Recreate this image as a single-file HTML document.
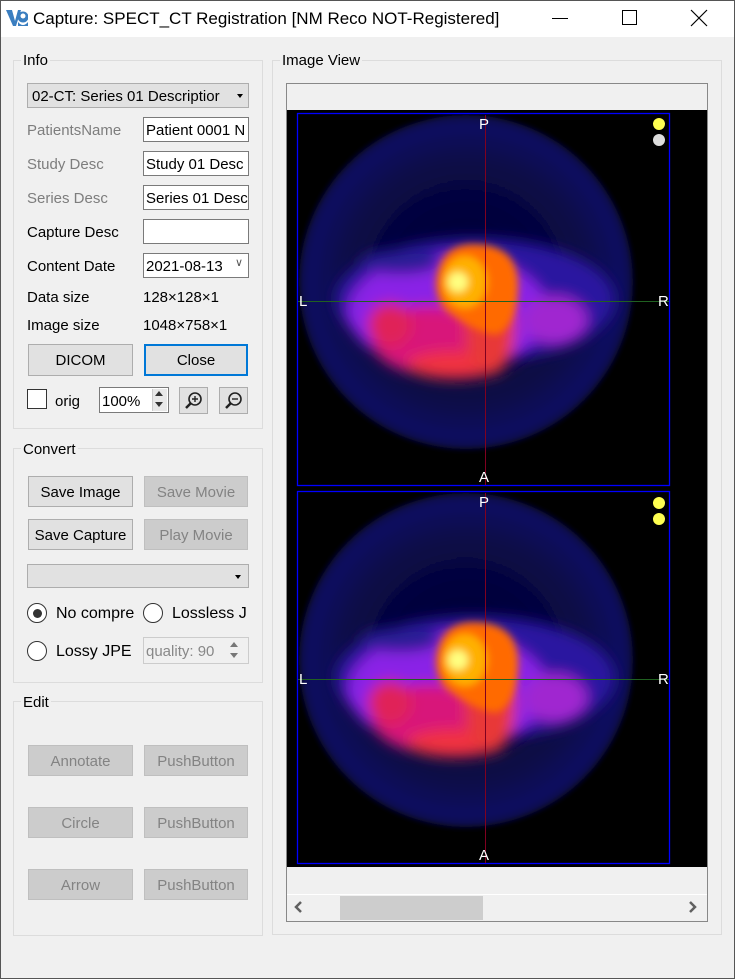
<!DOCTYPE html>
<html><head><meta charset="utf-8"><style>
*{box-sizing:border-box;margin:0;padding:0}
body{width:735px;height:979px;background:#f0f0f0;font-family:"Liberation Sans",sans-serif;font-size:15px;color:#000;position:relative;overflow:hidden}
.a{position:absolute}
.win{left:0;top:0;width:735px;height:979px;border:1px solid #555}
.title{left:1px;top:1px;width:733px;height:36px;background:#fff}
.grp{border:1px solid #dcdcdc}
.lg{background:#f0f0f0;padding:0 2px;font-size:15px}
.btn{background:#e1e1e1;border:1px solid #adadad;text-align:center;line-height:32px;font-size:15px}
.dis{background:#cccccc;border:1px solid #bfbfbf;color:#838383}
.edit{background:#fff;border:1px solid #7a7a7a;padding-left:2px;line-height:25px;overflow:hidden;white-space:nowrap;font-size:15px}
.gray{color:#7d7d7d}
.radio{width:20px;height:20px;border:1px solid #333;border-radius:50%;background:#fff}
</style></head><body>
<div class="a win"></div>
<div class="a title"></div>
<svg class="a" style="left:6px;top:8px" width="22" height="20" viewBox="0 0 22 20"><path d="M0 2 L6 2 L9 13 L12 2 L15 2 L10 18 L7 18Z" fill="#3a7ec0"/><circle cx="17" cy="9" r="5.5" fill="#3a7ec0"/><circle cx="17" cy="8" r="2.5" fill="#fff"/><path d="M12 14 Q17 20 22 14 L22 18 L12 18Z" fill="#3a7ec0"/></svg>
<div class="a" style="left:33px;top:9px;font-size:17px;">Capture: SPECT_CT Registration [NM Reco NOT-Registered]</div>
<div class="a" style="left:552px;top:18px;width:16px;height:1px;background:#000"></div>
<div class="a" style="left:622px;top:10px;width:15px;height:15px;border:1px solid #000"></div>
<svg class="a" style="left:690px;top:9px" width="18" height="18"><path d="M1 1L17 17M17 1L1 17" stroke="#000" stroke-width="1.2"/></svg>

<div class="a grp" style="left:13px;top:60px;width:250px;height:369px"></div>
<div class="a lg" style="left:21px;top:52px">Info</div>
<div class="a btn" style="left:27px;top:83px;width:222px;height:25px;line-height:25px;text-align:left;padding-left:4px">02-CT: Series 01 Descriptior</div>
<div class="a" style="left:237px;top:94px;border:3px solid transparent;border-top:4px solid #000"></div>
<div class="a gray" style="left:27px;top:122px">PatientsName</div>
<div class="a edit" style="left:143px;top:117px;width:106px;height:25px">Patient 0001 N</div>
<div class="a gray" style="left:27px;top:156px">Study Desc</div>
<div class="a edit" style="left:143px;top:151px;width:106px;height:25px">Study 01 Desc</div>
<div class="a gray" style="left:27px;top:190px">Series Desc</div>
<div class="a edit" style="left:143px;top:185px;width:106px;height:25px">Series 01 Desc</div>
<div class="a" style="left:27px;top:224px">Capture Desc</div>
<div class="a edit" style="left:143px;top:219px;width:106px;height:25px"></div>
<div class="a" style="left:27px;top:258px">Content Date</div>
<div class="a edit" style="left:143px;top:253px;width:106px;height:25px">2021-08-13</div>
<div class="a" style="left:235px;top:256px;font-size:11px;color:#555">&#x2228;</div>
<div class="a" style="left:27px;top:289px">Data size</div>
<div class="a" style="left:143px;top:289px">128×128×1</div>
<div class="a" style="left:27px;top:317px">Image size</div>
<div class="a" style="left:143px;top:317px">1048×758×1</div>
<div class="a btn" style="left:28px;top:344px;width:105px;height:32px">DICOM</div>
<div class="a btn" style="left:144px;top:344px;width:104px;height:32px;border:2px solid #0078d7;background:#e1e1e1;line-height:30px">Close</div>
<div class="a" style="left:27px;top:389px;width:20px;height:20px;border:1px solid #333;background:#fff"></div>
<div class="a" style="left:55px;top:393px">orig</div>
<div class="a edit" style="left:99px;top:387px;width:70px;height:26px;line-height:27px">100%</div>
<div class="a" style="left:152px;top:389px;width:15px;height:22px;background:#e8e8e8;border-left:1px solid #ccc"></div>
<div class="a" style="left:155px;top:391px;border:4px solid transparent;border-bottom:5px solid #333;border-top:0"></div>
<div class="a" style="left:155px;top:402px;border:4px solid transparent;border-top:5px solid #333;border-bottom:0"></div>
<div class="a btn" style="left:179px;top:387px;width:29px;height:27px"></div>
<svg class="a" style="left:183px;top:390px" width="22" height="22"><circle cx="12" cy="9" r="6" fill="none" stroke="#222" stroke-width="1.6"/><path d="M9 9h6M12 6v6" stroke="#222" stroke-width="1.4"/><path d="M8 13l-5 5" stroke="#222" stroke-width="2.5"/></svg>
<div class="a btn" style="left:219px;top:387px;width:29px;height:27px"></div>
<svg class="a" style="left:223px;top:390px" width="22" height="22"><circle cx="12" cy="9" r="6" fill="none" stroke="#222" stroke-width="1.6"/><path d="M9 9h6" stroke="#222" stroke-width="1.4"/><path d="M8 13l-5 5" stroke="#222" stroke-width="2.5"/></svg>

<div class="a grp" style="left:13px;top:448px;width:250px;height:235px"></div>
<div class="a lg" style="left:21px;top:441px">Convert</div>
<div class="a btn" style="left:28px;top:476px;width:105px;height:31px">Save Image</div>
<div class="a btn dis" style="left:144px;top:476px;width:104px;height:31px">Save Movie</div>
<div class="a btn" style="left:28px;top:519px;width:105px;height:31px">Save Capture</div>
<div class="a btn dis" style="left:144px;top:519px;width:104px;height:31px">Play Movie</div>
<div class="a btn" style="left:27px;top:564px;width:222px;height:24px"></div>
<div class="a" style="left:235px;top:575px;border:3px solid transparent;border-top:4px solid #000"></div>
<div class="a radio" style="left:27px;top:603px"></div>
<div class="a" style="left:33px;top:609px;width:9px;height:9px;border-radius:50%;background:#333"></div>
<div class="a" style="left:56px;top:605px;font-size:16px;width:80px;overflow:hidden;white-space:nowrap">No compre</div>
<div class="a radio" style="left:143px;top:603px"></div>
<div class="a" style="left:172px;top:605px;font-size:16px;width:78px;overflow:hidden;white-space:nowrap">Lossless J</div>
<div class="a radio" style="left:27px;top:641px"></div>
<div class="a" style="left:56px;top:643px;font-size:16px;width:78px;overflow:hidden;white-space:nowrap">Lossy JPE</div>
<div class="a edit" style="left:143px;top:637px;width:106px;height:27px;line-height:28px;border-color:#ccc;color:#888;background:#f0f0f0">quality: 90</div>
<div class="a" style="left:230px;top:642px;border:4px solid transparent;border-bottom:5px solid #777;border-top:0"></div>
<div class="a" style="left:230px;top:653px;border:4px solid transparent;border-top:5px solid #777;border-bottom:0"></div>

<div class="a grp" style="left:13px;top:701px;width:250px;height:235px"></div>
<div class="a lg" style="left:21px;top:694px">Edit</div>
<div class="a btn dis" style="left:28px;top:745px;width:105px;height:31px">Annotate</div>
<div class="a btn dis" style="left:144px;top:745px;width:104px;height:31px">PushButton</div>
<div class="a btn dis" style="left:28px;top:807px;width:105px;height:31px">Circle</div>
<div class="a btn dis" style="left:144px;top:807px;width:104px;height:31px">PushButton</div>
<div class="a btn dis" style="left:28px;top:869px;width:105px;height:31px">Arrow</div>
<div class="a btn dis" style="left:144px;top:869px;width:104px;height:31px">PushButton</div>

<div class="a grp" style="left:272px;top:60px;width:450px;height:875px"></div>
<div class="a lg" style="left:280px;top:52px">Image View</div>
<div class="a" style="left:286px;top:83px;width:422px;height:839px;border:1px solid #888;background:#f0f0f0"></div>
<svg class="a" style="left:287px;top:110px" width="420" height="757" viewBox="287 110 420 757">
<defs>
<filter id="b" x="-50%" y="-50%" width="200%" height="200%"><feGaussianBlur stdDeviation="7"/></filter>
<filter id="b2" x="-50%" y="-50%" width="200%" height="200%"><feGaussianBlur stdDeviation="4"/></filter>
<filter id="b3" x="-20%" y="-20%" width="140%" height="140%"><feGaussianBlur stdDeviation="3"/></filter>
<radialGradient id="rg"><stop offset="0" stop-color="#040430"/><stop offset="0.7" stop-color="#070745"/><stop offset="0.93" stop-color="#0c0c60"/><stop offset="1" stop-color="#080848"/></radialGradient>
<g id="img">
<circle cx="466" cy="282" r="167" fill="url(#rg)" filter="url(#b3)"/>
<g filter="url(#b)">
<ellipse cx="475" cy="300" rx="140" ry="62" fill="#2a18a0"/>
<ellipse cx="448" cy="312" rx="100" ry="58" fill="#8a22e6"/>
<ellipse cx="555" cy="320" rx="32" ry="24" fill="#a028d0"/>
<ellipse cx="430" cy="340" rx="58" ry="34" fill="#d8187a"/>
<ellipse cx="390" cy="325" rx="22" ry="22" fill="#e02058"/>
<ellipse cx="455" cy="365" rx="48" ry="14" fill="#f03040"/>
<ellipse cx="490" cy="330" rx="25" ry="45" fill="#e83838"/>
<ellipse cx="400" cy="262" rx="40" ry="12" fill="#2a1a95"/>
</g>
<g filter="url(#b2)">
<path d="M440 265 Q450 240 485 245 Q520 250 518 290 Q515 330 495 335 Q470 330 445 310 Q430 290 440 265Z" fill="#ff6a00"/>
<ellipse cx="465" cy="282" rx="22" ry="26" fill="#ffb000"/>
<circle cx="458" cy="282" r="10" fill="#ffff80"/>
</g>
<rect x="297.5" y="113.5" width="372" height="372" fill="none" stroke="#0000ff" stroke-width="1.3"/>
<line x1="485.5" y1="115" x2="485.5" y2="485" stroke="#800020" stroke-width="1"/>
<line x1="298" y1="301.5" x2="669" y2="301.5" stroke="#206020" stroke-width="1"/>
<text x="484" y="129" fill="#fff" font-family="Liberation Sans" font-size="15" text-anchor="middle">P</text>
<text x="484" y="482" fill="#fff" font-family="Liberation Sans" font-size="15" text-anchor="middle">A</text>
<text x="299" y="306" fill="#fff" font-family="Liberation Sans" font-size="15">L</text>
<text x="658" y="306" fill="#fff" font-family="Liberation Sans" font-size="15">R</text>
</g>
</defs>
<rect x="287" y="110" width="420" height="757" fill="#000"/>
<use href="#img"/>
<circle cx="659" cy="124" r="6" fill="#ffff50"/>
<circle cx="659" cy="140" r="6" fill="#dddddd"/>
<use href="#img" transform="translate(0,378)"/>
<circle cx="659" cy="503" r="6" fill="#ffff50"/>
<circle cx="659" cy="519" r="6" fill="#ffff50"/>
</svg>
<div class="a" style="left:287px;top:894px;width:420px;height:1px;background:#fff"></div>
<div class="a" style="left:340px;top:896px;width:143px;height:24px;background:#cdcdcd"></div>
<svg class="a" style="left:292px;top:900px" width="14" height="14"><path d="M9 2L4 7L9 12" stroke="#606060" stroke-width="2.5" fill="none"/></svg>
<svg class="a" style="left:685px;top:900px" width="14" height="14"><path d="M5 2L10 7L5 12" stroke="#606060" stroke-width="2.5" fill="none"/></svg>
</body></html>
